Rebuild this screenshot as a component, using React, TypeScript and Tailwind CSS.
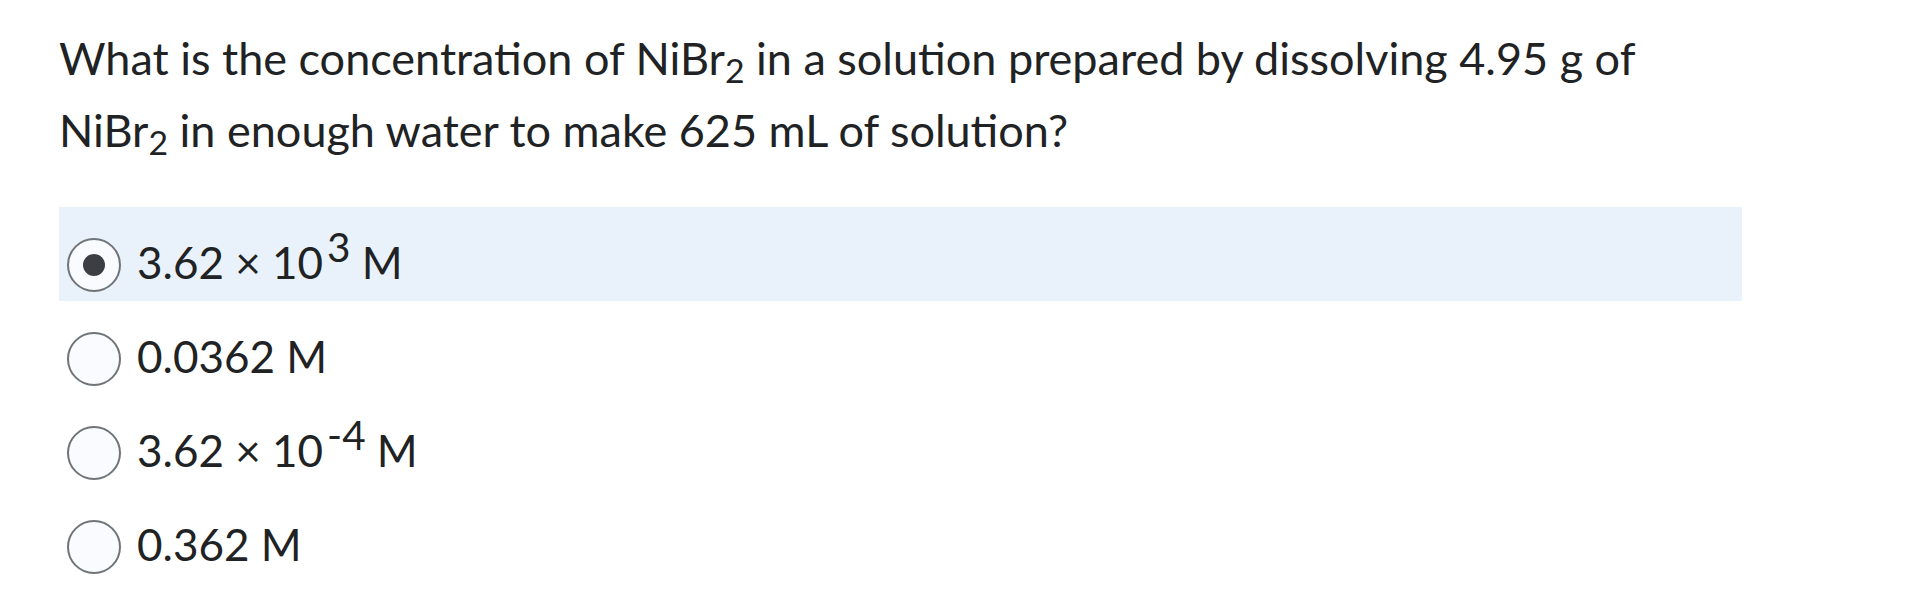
import React from 'react';

type Choice = {
  id: string;
  body: React.ReactNode;
  selected?: boolean;
};

const Sup = ({ children }: { children: React.ReactNode }) => (
  <sup className="relative top-[-0.42em] ml-[0.1em] align-baseline text-[0.92em] leading-none">{children}</sup>
);

const Sub = ({ children }: { children: React.ReactNode }) => (
  <sub className="relative bottom-[-0.25em] align-baseline text-[0.75em] leading-none">{children}</sub>
);

const CHOICES: Choice[] = [
  { id: 'a', selected: true, body: <>3.62 × 10<Sup>3</Sup> M</> },
  { id: 'b', body: <>0.0362 M</> },
  { id: 'c', body: <>3.62 × 10<Sup>-4</Sup> M</> },
  { id: 'd', body: <>0.362 M</> },
];

function Radio({ checked }: { checked?: boolean }) {
  return (
    <span className="flex h-[54px] w-[54px] flex-shrink-0 items-center justify-center rounded-full border-2 border-[#6f7479] bg-[#f9fbfe]">
      {checked && <span className="h-[22px] w-[22px] rounded-full bg-[#3b3f44]" />}
    </span>
  );
}

export default function App() {
  return (
    <div
      className="min-h-[600px] bg-white px-[59px] pt-[22px] text-[#202224]"
      style={{ fontFamily: 'Lato, "Noto Sans", sans-serif' }}
    >
      <div className="flex w-[1683px] flex-col gap-[41px]">
        {/* ── Question ── */}
        <p className="pr-[30px] text-[45px] leading-[72px]">
          What is the concentration of NiBr<Sub>2</Sub> in a solution prepared by dissolving 4.95 g of
          NiBr<Sub>2</Sub> in enough water to make 625 mL of solution?
        </p>

        {/* ── Choices ── */}
        <div className="flex flex-col">
          {CHOICES.map((c) => (
            <label
              key={c.id}
              className={
                c.selected
                  ? 'flex h-[94px] items-start gap-4 bg-[#e9f2fb] pl-2'
                  : 'flex h-[94px] items-start gap-4 pl-2'
              }
            >
              <span className="pt-[31px]">
                <Radio checked={c.selected} />
              </span>
              <span className="pt-[8px] text-[44px] leading-[94px]">{c.body}</span>
            </label>
          ))}
        </div>
      </div>
    </div>
  );
}
